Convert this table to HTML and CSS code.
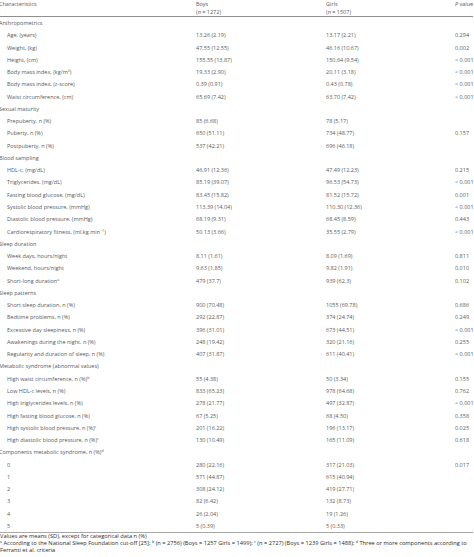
FILE: index.html
```html
<!DOCTYPE html>
<html lang="en">
<head>
<meta charset="utf-8">
<title>Characteristics by sex</title>
<link rel="stylesheet" href="styles.css">
</head>
<body>
<table class="tbl">
  <colgroup>
    <col class="c-label"><col class="c-boys"><col class="c-girls"><col class="c-p">
  </colgroup>
  <thead>
    <tr class="head">
      <th>Characteristics</th>
      <th>Boys<br>(<i>n</i> = 1272)</th>
      <th>Girls<br>(<i>n</i> = 1507)</th>
      <th><i>P</i> value</th>
    </tr>
  </thead>
  <tbody>
    <tr class="sec"><td>Anthropometrics</td><td></td><td></td><td></td></tr>
    <tr><td>Age, (years)</td><td>13.26 (2.19)</td><td>13.17 (2.21)</td><td>0.294</td></tr>
    <tr><td>Weight, (kg)</td><td>47.55 (12.55)</td><td>46.16 (10.67)</td><td>0.002</td></tr>
    <tr><td>Height, (cm)</td><td>155.55 (13.87)</td><td>150.64 (9.54)</td><td>&lt; 0.001</td></tr>
    <tr><td>Body mass index, (kg/m<sup>2</sup>)</td><td>19.33 (2.90)</td><td>20.11 (3.18)</td><td>&lt; 0.001</td></tr>
    <tr><td>Body mass index, (z-score)</td><td>0.39 (0.91)</td><td>0.43 (0.78)</td><td>&lt; 0.001</td></tr>
    <tr><td>Waist circumference, (cm)</td><td>65.69 (7.42)</td><td>63.70 (7.42)</td><td>&lt; 0.001</td></tr>
    <tr class="sec"><td>Sexual maturity</td><td></td><td></td><td></td></tr>
    <tr><td>Prepuberty, n (%)</td><td>85 (6.68)</td><td>78 (5.17)</td><td></td></tr>
    <tr><td>Puberty, n (%)</td><td>650 (51.11)</td><td>734 (48.77)</td><td>0.157</td></tr>
    <tr><td>Postpuberty, n (%)</td><td>537 (42.21)</td><td>696 (46.18)</td><td></td></tr>
    <tr class="sec"><td>Blood sampling</td><td></td><td></td><td></td></tr>
    <tr><td>HDL-c, (mg/dL)</td><td>46.91 (12.36)</td><td>47.49 (12.23)</td><td>0.215</td></tr>
    <tr><td>Triglycerides, (mg/dL)</td><td>85.19 (39.07)</td><td>96.53 (54.73)</td><td>&lt; 0.001</td></tr>
    <tr><td>Fasting blood glucose, (mg/dL)</td><td>83.45 (15.82)</td><td>81.52 (15.72)</td><td>0.001</td></tr>
    <tr><td>Systolic blood pressure, (mmHg)</td><td>113.39 (14.04)</td><td>110.30 (12.36)</td><td>&lt; 0.001</td></tr>
    <tr><td>Diastolic blood pressure, (mmHg)</td><td>68.19 (9.31)</td><td>68.45 (8.59)</td><td>0.443</td></tr>
    <tr><td>Cardiorespiratory fitness, (ml.kg.min<sup>−1</sup>)</td><td>50.13 (3.66)</td><td>35.55 (2.79)</td><td>&lt; 0.001</td></tr>
    <tr class="sec"><td>Sleep duration</td><td></td><td></td><td></td></tr>
    <tr><td>Week days, hours/night</td><td>8.11 (1.61)</td><td>8.09 (1.69)</td><td>0.811</td></tr>
    <tr><td>Weekend, hours/night</td><td>9.63 (1.85)</td><td>9.82 (1.91)</td><td>0.010</td></tr>
    <tr><td>Short-long duration<sup>a</sup></td><td>479 (37.7)</td><td>939 (62.3)</td><td>0.102</td></tr>
    <tr class="sec"><td>Sleep patterns</td><td></td><td></td><td></td></tr>
    <tr><td>Short sleep duration, n (%)</td><td>900 (70.48)</td><td>1055 (69.78)</td><td>0.686</td></tr>
    <tr><td>Bedtime problems, n (%)</td><td>292 (22.87)</td><td>374 (24.74)</td><td>0.249</td></tr>
    <tr><td>Excessive day sleepiness, n (%)</td><td>396 (31.01)</td><td>673 (44.51)</td><td>&lt; 0.001</td></tr>
    <tr><td>Awakenings during the night, n (%)</td><td>248 (19.42)</td><td>320 (21.16)</td><td>0.255</td></tr>
    <tr><td>Regularity and duration of sleep, n (%)</td><td>407 (31.87)</td><td>611 (40.41)</td><td>&lt; 0.001</td></tr>
    <tr class="sec"><td>Metabolic syndrome (abnormal values)</td><td></td><td></td><td></td></tr>
    <tr><td>High waist circumference, n (%)<sup>b</sup></td><td>55 (4.38)</td><td>50 (3.34)</td><td>0.155</td></tr>
    <tr><td>Low HDL-c levels, n (%)</td><td>833 (65.23)</td><td>978 (64.68)</td><td>0.762</td></tr>
    <tr><td>High triglycerides levels, n (%)</td><td>278 (21.77)</td><td>497 (32.87)</td><td>&lt; 0.001</td></tr>
    <tr><td>High fasting blood glucose, n (%)</td><td>67 (5.25)</td><td>68 (4.50)</td><td>0.358</td></tr>
    <tr><td>High systolic blood pressure, n (%)<sup>c</sup></td><td>201 (16.22)</td><td>196 (13.17)</td><td>0.025</td></tr>
    <tr><td>High diastolic blood pressure, n (%)<sup>c</sup></td><td>130 (10.49)</td><td>165 (11.09)</td><td>0.618</td></tr>
    <tr class="sec"><td>Components metabolic syndrome, n (%)<sup>d</sup></td><td></td><td></td><td></td></tr>
    <tr><td>0</td><td>280 (22.16)</td><td>317 (21.03)</td><td>0.017</td></tr>
    <tr><td>1</td><td>571 (44.87)</td><td>615 (40.94)</td><td></td></tr>
    <tr><td>2</td><td>308 (24.12)</td><td>419 (27.71)</td><td></td></tr>
    <tr><td>3</td><td>82 (6.42)</td><td>132 (8.73)</td><td></td></tr>
    <tr><td>4</td><td>26 (2.04)</td><td>19 (1.26)</td><td></td></tr>
    <tr><td>5</td><td>5 (0.39)</td><td>5 (0.33)</td><td></td></tr>
  </tbody>
</table>
<div class="notes">
  <p>Values are means (SD), except for categorical data n (%)</p>
  <p><sup>a</sup> According to the National Sleep Foundation cut-off [25]; <sup>b</sup> (n = 2756) (Boys = 1257 Girls = 1499); <sup>c</sup> (n = 2727) (Boys = 1239 Girls = 1488); <sup>d</sup> Three or more components according to</p>
  <p>Ferranti et al. criteria</p>
</div>
</body>
</html>
```
FILE: styles.css
```css
html, body {
  margin: 0;
  padding: 0;
  background: #ffffff;
  overflow: hidden;
}
body {
  width: 474px;
  font-family: "Open Sans", "DejaVu Sans", sans-serif;
  font-size: 5.5px;
  color: #5a5a5a;
}
.tbl {
  width: 474px;
  table-layout: fixed;
  border-collapse: collapse;
  border-spacing: 0;
  margin-left: -1px;
}
.c-label { width: 197px; }
.c-boys { width: 130px; }
.c-girls { width: 129px; }
.c-p { width: 18px; }
.tbl th, .tbl td {
  padding: 0;
  white-space: nowrap;
  overflow: visible;
  text-align: left;
  font-weight: normal;
}
.head th {
  vertical-align: top;
  line-height: 8px;
  height: 16px;
  border-bottom: 1px solid #8f8f8f;
}
.tbl tbody td {
  height: 12.27px;
  line-height: 12.27px;
  vertical-align: middle;
}
.tbl tbody td:first-child { padding-left: 8px; }
.tbl tbody tr.sec td:first-child { padding-left: 0; }
.tbl tbody tr:last-child td { border-bottom: 1px solid #a8a8a8; }
sup {
  font-size: 3.6px;
  line-height: 0;
  vertical-align: 2px;
}
.notes {
  color: #2c2c2c;
  font-size: 5.7px;
}
.notes p {
  margin: 0;
  line-height: 7px;
  white-space: nowrap;
}
```
